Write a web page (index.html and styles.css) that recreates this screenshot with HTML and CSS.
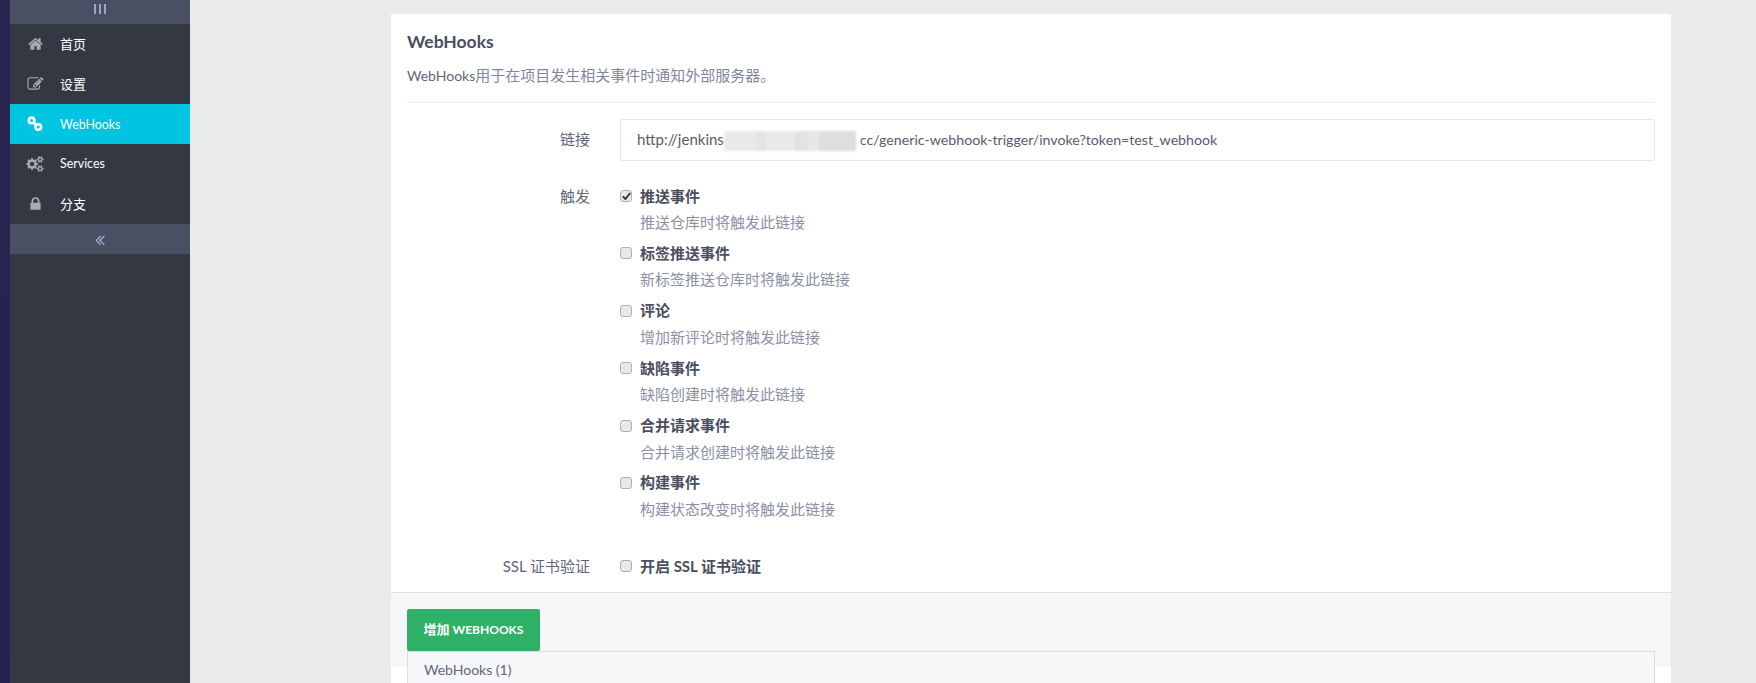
FILE: index.html
```html
<!DOCTYPE html>
<html lang="zh-CN">
<head>
  <meta charset="UTF-8">
  <title>WebHooks</title>
  <link rel="stylesheet" href="styles.css">
</head>
<body>
  <div class="strip"></div>

  <aside class="sidebar">
    <div class="sidebar-top"><i></i><i></i><i></i></div>
    <a class="nav-item nav-cjk">
      <span class="nav-icon"><svg width="15" height="16" viewBox="0 0 1664 1792"><path d="M1408 992v480q0 26-19 45t-45 19h-384v-384h-256v384h-384q-26 0-45-19t-19-45v-480q0-1 .5-3t.5-3l575-474 575 474q1 2 1 6zm223-69l-62 74q-8 9-21 11h-3q-13 0-21-7l-692-577-692 577q-12 8-24 7-13-2-21-11l-62-74q-8-10-7-23.5t11-21.5l719-599q32-26 76-26t76 26l244 204v-195q0-14 9-23t23-9h192q14 0 23 9t9 23v408l219 182q10 8 11 21.5t-7 23.5z"/></svg></span>
      首页
    </a>
    <a class="nav-item nav-cjk">
      <span class="nav-icon"><svg width="17" height="16" viewBox="0 0 1800 1792"><path d="M888 1184l116-116-152-152-116 116v56h96v96h56zm440-720q-16-16-33 1l-350 350q-17 17-1 33t33-1l350-350q17-17 1-33zm80 594v190q0 119-84.5 203.5t-203.5 84.5h-832q-119 0-203.5-84.5t-84.5-203.5v-832q0-119 84.5-203.5t203.5-84.5h832q63 0 117 25 15 7 18 23 3 17-9 29l-49 49q-14 14-32 8-23-6-45-6h-832q-66 0-113 47t-47 113v832q0 66 47 113t113 47h832q66 0 113-47t47-113v-126q0-13 9-22l64-64q15-15 35-7t20 29zm-96-738l288 288-672 672h-288v-288zm444 132l-92 92-288-288 92-92q28-28 68-28t68 28l152 152q28 28 28 68t-28 68z"/></svg></span>
      设置
    </a>
    <a class="nav-item active">
      <span class="nav-icon"><svg width="16" height="16" viewBox="0 0 16 16"><g fill="none" stroke="#fff" stroke-width="2.6"><circle cx="4.6" cy="4.4" r="2.8"/><circle cx="11.3" cy="11" r="2.8"/><path d="M6 6l4 4"/></g></svg></span>
      WebHooks
    </a>
    <a class="nav-item nav-services">
      <span class="nav-icon"><svg width="18" height="16" viewBox="0 0 1920 1792"><path d="M896 896q0-106-75-181t-181-75-181 75-75 181 75 181 181 75 181-75 75-181zm768 512q0-52-38-90t-90-38-90 38-38 90q0 53 37.5 90.5t90.5 37.5 90.5-37.5 37.5-90.5zm0-1024q0-52-38-90t-90-38-90 38-38 90q0 53 37.5 90.5t90.5 37.5 90.5-37.5 37.5-90.5zm-384 421v185q0 10-7 19.5t-16 10.5l-155 24q-11 35-32 76 34 48 90 115 7 11 7 20 0 12-7 19-23 30-82.5 89.5t-78.5 59.5q-11 0-21-7l-115-90q-37 19-77 31-11 108-23 155-7 24-30 24h-186q-11 0-20-7.5t-10-17.5l-23-153q-34-10-75-31l-118 89q-7 7-20 7-11 0-21-8-144-133-144-160 0-9 7-19 10-14 41-53t47-61q-23-44-35-82l-152-24q-10-1-17-9.5t-7-19.5v-185q0-10 7-19.5t16-10.5l155-24q11-35 32-76-34-48-90-115-7-11-7-20 0-12 7-20 22-30 82-89t79-59q11 0 21 7l115 90q34-18 77-32 11-108 23-154 7-24 30-24h186q11 0 20 7.5t10 17.5l23 153q34 10 75 31l118-89q8-7 20-7 11 0 21 8 144 133 144 160 0 8-7 19-12 16-42 54t-45 60q23 48 34 82l152 23q10 2 17 10.5t7 19.5zm640 533v140q0 16-149 31-12 27-30 52 51 113 51 138 0 4-4 7-122 71-124 71-8 0-46-47t-52-68q-20 2-30 2t-30-2q-14 21-52 68t-46 47q-2 0-124-71-4-3-4-7 0-25 51-138-18-25-30-52-149-15-149-31v-140q0-16 149-31 13-29 30-52-51-113-51-138 0-4 4-7 4-2 35-20t59-34 30-16q8 0 46 46.5t52 67.5q20-2 30-2t30 2q51-71 92-112l6-2q4 0 124 70 4 3 4 7 0 25-51 138 17 23 30 52 149 15 149 31zm0-1024v140q0 16-149 31-12 27-30 52 51 113 51 138 0 4-4 7-122 71-124 71-8 0-46-47t-52-68q-20 2-30 2t-30-2q-14 21-52 68t-46 47q-2 0-124-71-4-3-4-7 0-25 51-138-18-25-30-52-149-15-149-31v-140q0-16 149-31 13-29 30-52-51-113-51-138 0-4 4-7 4-2 35-20t59-34 30-16q8 0 46 46.5t52 67.5q20-2 30-2t30 2q51-71 92-112l6-2q4 0 124 70 4 3 4 7 0 25-51 138 17 23 30 52 149 15 149 31z"/></svg></span>
      Services
    </a>
    <a class="nav-item nav-cjk">
      <span class="nav-icon"><svg width="11" height="16" viewBox="0 0 1152 1792"><path d="M320 768h512v-192q0-106-75-181t-181-75-181 75-75 181v192zm832 96v576q0 40-28 68t-68 28h-960q-40 0-68-28t-28-68v-576q0-40 28-68t68-28h32v-192q0-184 132-316t316-132 316 132 132 316v192h32q40 0 68 28t28 68z"/></svg></span>
      分支
    </a>
    <div class="sidebar-collapse">
      <svg width="10" height="17" viewBox="0 0 1024 1792"><path d="M627 1408q0 13-10 23l-50 50q-10 10-23 10t-23-10l-466-466q-10-10-10-23t10-23l466-466q10-10 23-10t23 10l50 50q10 10 10 23t-10 23l-393 393 393 393q10 10 10 23zm384 0q0 13-10 23l-50 50q-10 10-23 10t-23-10l-466-466q-10-10-10-23t10-23l466-466q10-10 23-10t23 10l50 50q10 10 10 23t-10 23l-393 393 393 393q10 10 10 23z"/></svg>
    </div>
  </aside>

  <main class="main">
    <section class="card">
      <div class="card-body">
        <h4 class="card-title">WebHooks</h4>
        <p class="card-desc">WebHooks<span class="cjk">用于在项目发生相关事件时通知外部服务器。</span></p>
        <div class="divider"></div>

        <div class="field">
          <div class="field-label">链接</div>
          <div class="url-input">http://jenkins<span class="blurred"></span><span class="url-tail">cc/generic-webhook-trigger/invoke?token=test_webhook</span></div>
        </div>

        <div class="field field-events">
          <div class="field-label">触发</div>
          <div class="events">
            <div class="event">
              <div class="event-name"><span class="checkbox"><svg width="9" height="8" viewBox="0 0 9 8"><path d="M.8 4.3l2.6 2.7L8.2 1" fill="none" stroke="#333" stroke-width="1.9"/></svg></span>推送事件</div>
              <div class="event-help">推送仓库时将触发此链接</div>
            </div>
            <div class="event">
              <div class="event-name"><span class="checkbox"></span>标签推送事件</div>
              <div class="event-help">新标签推送仓库时将触发此链接</div>
            </div>
            <div class="event">
              <div class="event-name"><span class="checkbox"></span>评论</div>
              <div class="event-help">增加新评论时将触发此链接</div>
            </div>
            <div class="event">
              <div class="event-name"><span class="checkbox"></span>缺陷事件</div>
              <div class="event-help">缺陷创建时将触发此链接</div>
            </div>
            <div class="event">
              <div class="event-name"><span class="checkbox"></span>合并请求事件</div>
              <div class="event-help">合并请求创建时将触发此链接</div>
            </div>
            <div class="event">
              <div class="event-name"><span class="checkbox"></span>构建事件</div>
              <div class="event-help">构建状态改变时将触发此链接</div>
            </div>
          </div>
        </div>

        <div class="field field-ssl">
          <div class="field-label">SSL 证书验证</div>
          <div class="event-name"><span class="checkbox"></span>开启 SSL 证书验证</div>
        </div>
      </div>

      <div class="card-actions">
        <button class="btn-add"><span class="cjk-btn">增加</span> WebHooks</button>
        <div class="hooks-panel">WebHooks (1)</div>
      </div>
    </section>
  </main>
</body>
</html>
```

FILE: styles.css
```css
* {
  box-sizing: border-box;
  margin: 0;
  padding: 0;
}

html, body {
  height: 683px;
  overflow: hidden;
}

body {
  display: flex;
  background-color: #e9eaec;
  font-family: Lato, "Noto Sans CJK SC", sans-serif;
  font-size: 15px;
  color: #40485b;
}

.strip {
  width: 10px;
  background: linear-gradient(#2a2450, #22244e);
}

/* Sidebar */
.sidebar {
  width: 180px;
  background-color: #343843;
}

.sidebar-top {
  display: flex;
  justify-content: center;
  gap: 3px;
  height: 24px;
  padding-top: 4px;
  background-color: #4a5064;
}

.sidebar-top i {
  width: 2px;
  height: 10px;
  background-color: #93a8c8;
}

.nav-item {
  display: flex;
  align-items: center;
  height: 40px;
  font-size: 12.4px;
  color: #fff;
}

.nav-cjk {
  font-size: 13px;
}

.nav-item.active {
  background-color: #00c4e0;
}

.nav-icon {
  display: flex;
  justify-content: center;
  width: 50px;
  fill: #a5acb8;
}

.nav-cjk,
.nav-services {
  padding-bottom: 2px;
}

.nav-cjk .nav-icon,
.nav-services .nav-icon {
  margin-top: 2px;
}

.sidebar-collapse {
  display: flex;
  justify-content: center;
  align-items: center;
  height: 30px;
  background-color: #4a5064;
  fill: #9db3d4;
}

/* Main */
.main {
  flex: 1;
  padding: 14px 85px 0 201px;
}

.card {
  background-color: #fff;
  height: 700px;
}

.card-body {
  height: 579px;
  padding: 0 16px;
  border-bottom: 1px solid #dcdde3;
}

.card-title {
  padding-top: 16px;
  font-size: 17.5px;
  font-weight: 700;
  line-height: 24px;
  color: #494f5e;
}

.card-desc {
  margin-top: 9px;
  font-size: 14px;
  line-height: 24px;
  color: #5f6679;
}

.card-desc .cjk {
  font-size: 15px;
  color: #7f879c;
}

.divider {
  height: 1px;
  margin: 14px 0 16px;
  background-color: #ebecef;
}

.field {
  display: grid;
  grid-template-columns: 183px 1fr;
  column-gap: 30px;
}

.field-label {
  text-align: right;
  color: #5f6679;
  line-height: 40px;
}

.url-input {
  height: 42px;
  padding: 0 16px;
  line-height: 38px;
  border: 1px solid #e6e7ea;
  border-radius: 2px;
  color: #555c6e;
}

.blurred {
  display: inline-block;
  vertical-align: middle;
  width: 136px;
  height: 20px;
  filter: blur(1px);
  background: linear-gradient(90deg, #e9e9e9 0 24%, #e4e2e4 24% 30%, #e9e9e9 30% 52%, #e2e2e2 52% 62%, #e6e6e6 62% 70%, #dedede 70% 97%, #fff 97%);
}

.url-tail {
  font-size: 14.2px;
}

.field-events {
  margin-top: 22px;
}

.field-events .field-label,
.field-ssl .field-label {
  line-height: 26px;
}

.event {
  height: 57.4px;
}

.event-name {
  display: flex;
  align-items: center;
  height: 24px;
  font-weight: 700;
  color: #494f5e;
}

.event-help {
  padding: 3px 0 0 20px;
  line-height: 24px;
  color: #8a91a5;
}

.checkbox {
  display: flex;
  align-items: center;
  justify-content: center;
  width: 12px;
  height: 12px;
  margin: 2px 8px 0 0;
  background-color: #e8e8e8;
  border: 1px solid #b0b0b0;
  border-radius: 3px;
}

.field-ssl {
  margin-top: 26px;
}

/* Actions */
.card-actions {
  height: 74px;
  padding: 16px 16px 0;
  background-color: #f6f7f9;
}

.btn-add {
  display: block;
  width: 133px;
  height: 42px;
  padding-bottom: 3px;
  border: 0;
  border-radius: 2px;
  background-color: #2fb167;
  color: #fff;
  font-family: inherit;
  font-size: 12px;
  font-weight: 700;
  text-transform: uppercase;
}

.cjk-btn {
  font-size: 13px;
}

.hooks-panel {
  height: 40px;
  padding: 6px 16px;
  line-height: 24px;
  font-size: 14px;
  color: #5f6679;
  background-color: #f6f7f9;
  border: 1px solid #dcdde3;
}
```
